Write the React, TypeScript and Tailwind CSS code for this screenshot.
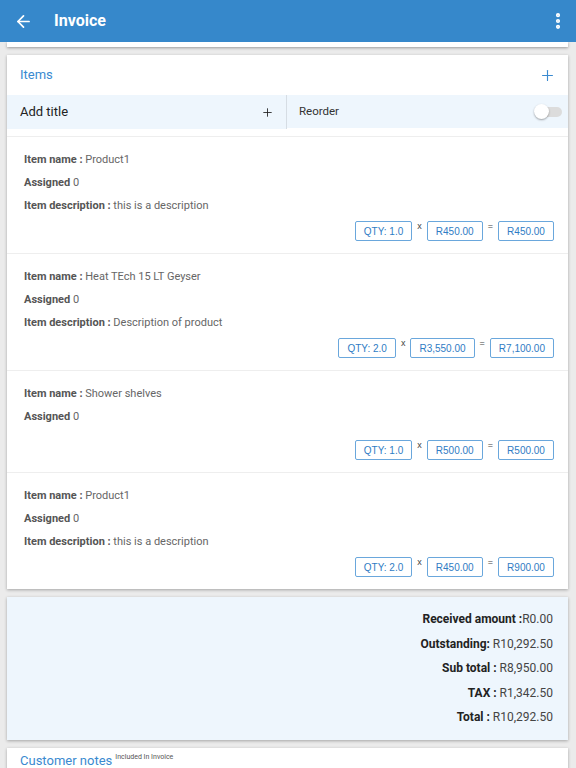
import { ArrowLeft, EllipsisVertical, Plus } from "lucide-react"

type Item = {
  name: string
  assigned: number
  description?: string
  qty: string
  price: string
  total: string
}

const items: Item[] = [
  { name: "Product1", assigned: 0, description: "this is a description", qty: "1.0", price: "R450.00", total: "R450.00" },
  { name: "Heat TEch 15 LT Geyser", assigned: 0, description: "Description of product", qty: "2.0", price: "R3,550.00", total: "R7,100.00" },
  { name: "Shower shelves", assigned: 0, qty: "1.0", price: "R500.00", total: "R500.00" },
  { name: "Product1", assigned: 0, description: "this is a description", qty: "2.0", price: "R450.00", total: "R900.00" },
]

const totals = [
  ["Received amount :", "R0.00"],
  ["Outstanding:", " R10,292.50"],
  ["Sub total :", " R8,950.00"],
  ["TAX :", " R1,342.50"],
  ["Total :", " R10,292.50"],
]

function Pill({ children }: { children: React.ReactNode }) {
  return (
    <div className="h-[20px] px-[8px] min-w-[56px] flex items-center justify-center border border-[#6aa7dc] rounded-[2px] text-[10px] text-[#2f7cc4] font-['Liberation_Sans',Arial,sans-serif]">
      {children}
    </div>
  )
}

function ItemRow({ item, last }: { item: Item; last: boolean }) {
  return (
    <div className={`pt-[11px] pb-[12px] pl-[17px] pr-[14px] ${last ? "" : "border-b border-[#eeeeee]"}`}>
      <div className="text-[11px] leading-[23px] text-[#666]">
        <span className="font-bold text-[#555]">Item name :</span> {item.name}
      </div>
      <div className="text-[11px] leading-[23px] text-[#666]">
        <span className="font-bold text-[#555]">Assigned</span> {item.assigned}
      </div>
      {item.description ? (
        <div className="text-[11px] leading-[23px] text-[#666]">
          <span className="font-bold text-[#555]">Item description :</span> {item.description}
        </div>
      ) : (
        <div className="h-[8px]" />
      )}
      <div className="mt-[4px] flex justify-end items-start gap-[5px]">
        <Pill>QTY: {item.qty}</Pill>
        <span className="text-[9px] leading-[11px] text-[#444] font-['Liberation_Sans',Arial,sans-serif]">x</span>
        <Pill>{item.price}</Pill>
        <span className="text-[9px] leading-[11px] text-[#444] font-['Liberation_Sans',Arial,sans-serif]">=</span>
        <Pill>{item.total}</Pill>
      </div>
    </div>
  )
}

export default function App() {
  return (
    <div className="w-[576px] h-[768px] overflow-hidden bg-[#ebebeb] font-['Roboto',sans-serif]">
      <div className="h-[42px] bg-[#3688cb] flex items-center px-[14px] relative z-10">
        <ArrowLeft className="text-white" size={19} strokeWidth={2.2} />
        <span className="ml-[21px] text-white text-[16px] font-bold">Invoice</span>
        <EllipsisVertical className="ml-auto -mr-[6px] text-white" size={20} strokeWidth={3} />
      </div>

      <div className="mx-[7px] w-[561px]">
        <div className="h-[5px] bg-white shadow-[0_1px_3px_rgba(0,0,0,0.35)]" />

        <div className="mt-[8px] bg-white shadow-[0_1px_3px_rgba(0,0,0,0.3)]">
          <div className="h-[40px] flex items-center pl-[13px] pr-[12px]">
            <span className="text-[13px] text-[#3a8ad0]">Items</span>
            <Plus className="ml-auto text-[#3a8ad0]" size={17} strokeWidth={1.6} />
          </div>
          <div className="h-[34px] flex">
            <div className="w-[280px] bg-[#eef6fd] border-r border-[#d6dde4] flex items-center pl-[13px] pr-[12px]">
              <span className="text-[13px] text-[#222]">Add title</span>
              <Plus className="ml-auto text-[#222]" size={13} strokeWidth={1.6} />
            </div>
            <div className="flex-1 h-[33px] bg-[#eef6fd] flex items-center pl-[12px] pr-[6px]">
              <span className="text-[11.5px] text-[#333]">Reorder</span>
              <div className="ml-auto relative w-[28px] h-[16px] flex items-center">
                <div className="ml-[3px] w-[25px] h-[10px] rounded-full bg-[#dcdcdc]" />
                <div className="absolute left-0 top-[0.5px] w-[15px] h-[15px] rounded-full bg-white shadow-[0_1px_2px_rgba(0,0,0,0.35)]" />
              </div>
            </div>
          </div>
          <div className="h-[8px] border-b border-[#eeeeee]" />
          {items.map((it, i) => (
            <ItemRow key={i} item={it} last={i === items.length - 1} />
          ))}
        </div>

        <div className="mt-[8px] h-[143px] bg-[#eef6fd] shadow-[0_1px_3px_rgba(0,0,0,0.3)] pt-[10px] pr-[15px] flex flex-col items-end">
          {totals.map(([label, value]) => (
            <div key={label} className="h-[24.6px] leading-[24.6px] text-[12px] text-[#444]">
              <span className="font-bold text-[#222]">{label}</span>
              {value}
            </div>
          ))}
        </div>

        <div className="mt-[8px] h-[40px] bg-white shadow-[0_1px_3px_rgba(0,0,0,0.3)] pl-[13px] pt-[5px] flex items-start">
          <span className="text-[13px] leading-[15px] text-[#3a8ad0]">Customer notes</span>
          <span className="ml-[3px] text-[7px] leading-[9px] text-[#555]">Included In Invoice</span>
        </div>
      </div>
    </div>
  )
}
